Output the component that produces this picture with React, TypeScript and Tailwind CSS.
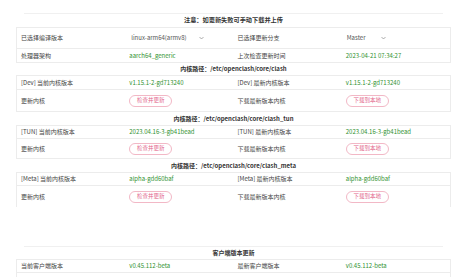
import React from "react";

const font = { fontFamily: '"Noto Sans CJK SC", "Noto Sans", sans-serif' };

function Btn({ children }: { children: React.ReactNode }) {
  return (
    <span className="inline-flex h-[12px] w-[43px] items-center justify-center rounded-full border border-[#f2b8c6] text-[5.5px] leading-none text-[#e2648a]">
      {children}
    </span>
  );
}

function Chevron() {
  return (
    <svg width="5" height="4" viewBox="0 0 10 6" className="ml-auto">
      <path d="M1 1l4 4 4-4" fill="none" stroke="#777" strokeWidth="1.2" />
    </svg>
  );
}

function Cell({ children, green }: { children?: React.ReactNode; green?: boolean }) {
  return (
    <div className={`flex items-center pl-[4px] ${green ? "text-[#2f912f]" : "text-[#444]"}`}>{children}</div>
  );
}

function Row({ h, cells }: { h: string; cells: React.ReactNode[] }) {
  return (
    <div className={`grid grid-cols-4 border-x border-t border-[#ececec] ${h}`}>
      {cells.map((c, i) => (
        <React.Fragment key={i}>{c}</React.Fragment>
      ))}
    </div>
  );
}

function Header({ h, children }: { h: string; children: React.ReactNode }) {
  return (
    <div className={`flex items-center justify-center border-t border-[#ececec] font-bold text-[#333] ${h}`}>
      {children}
    </div>
  );
}

export default function App() {
  return (
    <div className="h-[277px] w-[474px] overflow-hidden bg-white text-[6px] leading-none" style={font}>
      <div className="ml-[16px] w-[435px] pt-[13px]">
        <div className="mx-[8px] flex h-[14px] items-center justify-center border-t border-[#f0f0f0] text-[6.2px] font-bold text-[#333]">
          注意：如更新失败可手动下载并上传
        </div>
        <Row
          h="h-[21px]"
          cells={[
            <Cell>已选择编译版本</Cell>,
            <Cell>
              <div className="flex w-[79px] items-center pl-[2px] pr-[4px] text-[#555]">
                linux-arm64(armv8)
                <Chevron />
              </div>
            </Cell>,
            <Cell>已选择更新分支</Cell>,
            <Cell>
              <div className="flex w-[40px] items-center pl-[1px] text-[#555]">
                Master
                <Chevron />
              </div>
            </Cell>,
          ]}
        />
        <Row
          h="h-[14px]"
          cells={[
            <Cell>处理器架构</Cell>,
            <Cell green>aarch64_generic</Cell>,
            <Cell>上次检查更新时间</Cell>,
            <Cell green>2023-04-21 07:34:27</Cell>,
          ]}
        />
        <Header h="h-[13px]">内核路径：/etc/openclash/core/clash</Header>
        <Row
          h="h-[14px]"
          cells={[
            <Cell>[Dev] 当前内核版本</Cell>,
            <Cell green>v1.15.1-2-gd713240</Cell>,
            <Cell>[Dev] 最新内核版本</Cell>,
            <Cell green>v1.15.1-2-gd713240</Cell>,
          ]}
        />
        <Row
          h="h-[22px]"
          cells={[
            <Cell>更新内核</Cell>,
            <Cell>
              <Btn>检查并更新</Btn>
            </Cell>,
            <Cell>下载最新版本内核</Cell>,
            <Cell>
              <Btn>下载到本地</Btn>
            </Cell>,
          ]}
        />
        <Header h="h-[14px]">内核路径：/etc/openclash/core/clash_tun</Header>
        <Row
          h="h-[13px]"
          cells={[
            <Cell>[TUN] 当前内核版本</Cell>,
            <Cell green>2023.04.16-3-gb41bead</Cell>,
            <Cell>[TUN] 最新内核版本</Cell>,
            <Cell green>2023.04.16-3-gb41bead</Cell>,
          ]}
        />
        <Row
          h="h-[20px]"
          cells={[
            <Cell>更新内核</Cell>,
            <Cell>
              <Btn>检查并更新</Btn>
            </Cell>,
            <Cell>下载最新版本内核</Cell>,
            <Cell>
              <Btn>下载到本地</Btn>
            </Cell>,
          ]}
        />
        <Header h="h-[14px]">内核路径：/etc/openclash/core/clash_meta</Header>
        <Row
          h="h-[13px]"
          cells={[
            <Cell>[Meta] 当前内核版本</Cell>,
            <Cell green>alpha-gdd60baf</Cell>,
            <Cell>[Meta] 最新内核版本</Cell>,
            <Cell green>alpha-gdd60baf</Cell>,
          ]}
        />
        <Row
          h="h-[22px]"
          cells={[
            <Cell>更新内核</Cell>,
            <Cell>
              <Btn>检查并更新</Btn>
            </Cell>,
            <Cell>下载最新版本内核</Cell>,
            <Cell>
              <Btn>下载到本地</Btn>
            </Cell>,
          ]}
        />
        <div className="h-[39px]" />
        <div className="mx-[8px] flex h-[13px] items-center justify-center border-t border-[#f0f0f0] font-bold text-[#333]">
          客户端版本更新
        </div>
        <Row
          h="h-[13px]"
          cells={[
            <Cell>当前客户端版本</Cell>,
            <Cell green>v0.45.112-beta</Cell>,
            <Cell>最新客户端版本</Cell>,
            <Cell green>v0.45.112-beta</Cell>,
          ]}
        />
        <Row
          h="h-[26px]"
          cells={[
            <Cell>更新客户端</Cell>,
            <Cell>
              <Btn>检查并更新</Btn>
            </Cell>,
            <Cell>下载最新版本客户端</Cell>,
            <Cell>
              <Btn>下载到本地</Btn>
            </Cell>,
          ]}
        />
      </div>
    </div>
  );
}
